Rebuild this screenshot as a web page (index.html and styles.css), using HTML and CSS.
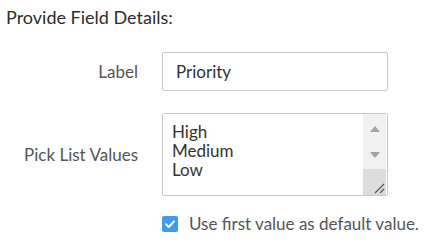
FILE: index.html
```html
<!DOCTYPE html>
<html>
<head>
<meta charset="utf-8">
<link rel="stylesheet" href="styles.css">
</head>
<body>
<div class="panel">
  <div class="title">Provide Field Details:</div>
  <div class="row row-label">
    <div class="label">Label</div>
    <div class="input">Priority</div>
  </div>
  <div class="row row-pick">
    <div class="label">Pick List Values</div>
    <div class="textbox">
      <div class="lines">
        <div>High</div>
        <div>Medium</div>
        <div>Low</div>
      </div>
      <div class="scrollbar">
        <div class="arrows">
          <span class="tri up"></span>
          <span class="tri down"></span>
        </div>
        <div class="resizer">
          <svg width="12" height="12" viewBox="0 0 12 12">
            <path d="M2 11 L11 2 M7 11 L11 7" stroke="#555" stroke-width="1.2" fill="none"/>
          </svg>
        </div>
      </div>
    </div>
  </div>
  <div class="row row-check">
    <div class="label"></div>
    <div class="check-wrap">
      <span class="checkbox">
        <svg width="16" height="16" viewBox="0 0 16 16">
          <path d="M4 8.2 L6.8 11 L12 5.4" stroke="#fff" stroke-width="2" fill="none" stroke-linecap="round" stroke-linejoin="round"/>
        </svg>
      </span>
      <span class="check-text">Use first value as default value.</span>
    </div>
  </div>
</div>
</body>
</html>
```
FILE: styles.css
```css
html, body {
  margin: 0;
  padding: 0;
  background: #fff;
}
body {
  font-family: Lato, "Open Sans", sans-serif;
  color: #333;
}
.panel {
  padding: 6px 0 0 6px;
}
.title {
  font-size: 18px;
  line-height: 22px;
  color: #2d2d2d;
}
.row {
  display: flex;
  align-items: center;
}
.label {
  width: 132px;
  text-align: right;
  font-size: 17px;
  color: #555;
  margin-right: 24px;
  flex: none;
}
.row-label {
  margin-top: 24px;
}
.input {
  width: 211px;
  height: 37px;
  border: 1px solid #c8c8c8;
  border-radius: 2px;
  padding-left: 13px;
  font-size: 17px;
  line-height: 37px;
  color: #333;
}
.row-pick {
  margin-top: 22px;
}
.textbox {
  width: 224px;
  height: 81px;
  border: 1px solid #c8c8c8;
  border-radius: 2px;
  display: flex;
}
.lines {
  flex: 1;
  padding: 8px 0 0 9px;
  font-size: 17px;
  line-height: 19px;
  color: #333;
}
.scrollbar {
  width: 23px;
  margin-right: 1px;
  display: flex;
  flex-direction: column;
  background: #f1f1f1;
}
.arrows {
  flex: 1;
  display: flex;
  flex-direction: column;
  align-items: center;
  padding-top: 12px;
}
.tri {
  width: 0;
  height: 0;
  border-left: 5px solid transparent;
  border-right: 5px solid transparent;
}
.tri.up {
  border-bottom: 6px solid #a3a3a3;
}
.tri.down {
  border-top: 6px solid #a3a3a3;
  margin-top: 20px;
}
.resizer {
  height: 25px;
  background: #dcdcdc;
  display: flex;
  align-items: flex-end;
  justify-content: flex-end;
  padding: 0 1px 1px 0;
}
.resizer svg {
  display: block;
}
.row-check {
  margin-top: 17px;
}
.check-wrap {
  display: flex;
  align-items: center;
}
.checkbox {
  width: 16px;
  height: 16px;
  border-radius: 2px;
  background: #3d9be9;
  display: block;
}
.checkbox svg {
  display: block;
}
.check-text {
  margin-left: 11px;
  font-size: 17px;
  color: #555;
}
```
